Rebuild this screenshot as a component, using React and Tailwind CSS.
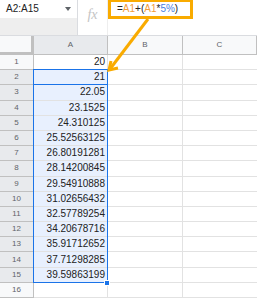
const values = [
  '20', '21', '22.05', '23.1525', '24.310125', '25.52563125', '26.80191281',
  '28.14200845', '29.54910888', '31.02656432', '32.57789254', '34.20678716',
  '35.91712652', '37.71298285', '39.59863199', '',
]

const cols = ['A', 'B', 'C']

export default function App() {
  return (
    <div className="relative w-[257px] h-[300px] overflow-hidden bg-white font-['Liberation_Sans',Arial,sans-serif] text-[#222]">
      {/* formula bar */}
      <div className="flex h-[36px] border-b border-[#dadce0]">
        <div className="w-[78px] flex flex-col border-r border-[#dadce0]">
          <div className="h-[18px] bg-white flex items-center justify-between pl-[6px] pr-[6px]">
            <span className="text-[10px] leading-none">A2:A15</span>
            <span className="w-0 h-0 border-x-[3.5px] border-x-transparent border-t-[4px] border-t-[#5f6368]" />
          </div>
          <div className="flex-1 bg-[#eeeeee]" />
        </div>
        <div className="w-[30px] flex items-start justify-center pt-[8px] border-r border-[#eeeeee]">
          <span className="font-['Liberation_Serif',serif] italic text-[14px] leading-none text-[#c4c4c4]">fx</span>
        </div>
        <div className="flex-1">
          <div className="w-[85px] h-[20px] -mt-px border-[3px] border-[#f9ab00] flex items-center pl-[6px] text-[10px] leading-none">
            <span>=</span>
            <span className="text-[#f29b3a]">A1</span>
            <span>+(</span>
            <span className="text-[#f29b3a]">A1</span>
            <span>*</span>
            <span className="text-[#4a7fe0]">5%</span>
            <span>)</span>
          </div>
        </div>
      </div>

      {/* column headers */}
      <div className="grid grid-cols-[34px_74px_75px_1fr] h-[19px] text-[8px] text-[#5f6368]">
        <div className="bg-[#f8f9fa] border-r-[3px] border-b-[3px] border-[#c0c0c0]" />
        {cols.map(c => (
          <div
            key={c}
            className={`flex items-center justify-center border-r border-b border-[#c0c0c0] ${c === 'A' ? 'bg-[#e8eaed]' : 'bg-[#f8f9fa]'}`}
          >
            {c}
          </div>
        ))}
      </div>

      {/* rows */}
      <div className="relative">
        {values.map((v, i) => {
          const selected = i >= 1 && i <= 14
          return (
            <div key={i} className="grid grid-cols-[34px_74px_75px_1fr] h-[15.2px]">
              <div className={`flex items-center justify-center text-[8px] text-[#5f6368] border-r border-b border-[#c0c0c0] ${selected ? 'bg-[#e8eaed]' : 'bg-[#f8f9fa]'}`}>
                {i + 1}
              </div>
              <div className={`flex items-center justify-end pr-[2px] text-[10px] leading-none border-r border-b border-[#e2e2e2] ${selected ? 'bg-[#e8f0fe]' : ''}`}>
                {v}
              </div>
              <div className="border-r border-b border-[#e2e2e2]" />
              <div className="border-b border-[#e2e2e2]" />
            </div>
          )
        })}
        {/* selection range */}
        <div className="absolute left-[33px] top-[14.2px] w-[75px] h-[214px] border border-[#1a73e8] pointer-events-none" />
        <div className="absolute left-[33px] top-[14.2px] w-[75px] h-[16.2px] border-[1.5px] border-[#1a73e8] pointer-events-none" />
        <div className="absolute left-[104px] top-[225px] w-[6px] h-[6px] bg-[#1a73e8] border border-white" />
      </div>

      {/* callout arrow */}
      <svg className="absolute inset-0 pointer-events-none" width="257" height="300" viewBox="0 0 257 300">
        <line x1="148" y1="19" x2="110" y2="69" stroke="#f9ab00" strokeWidth="3" />
        <polyline points="111,61 109,70 118,68" fill="none" stroke="#f9ab00" strokeWidth="3" strokeLinejoin="miter" />
      </svg>
    </div>
  )
}
